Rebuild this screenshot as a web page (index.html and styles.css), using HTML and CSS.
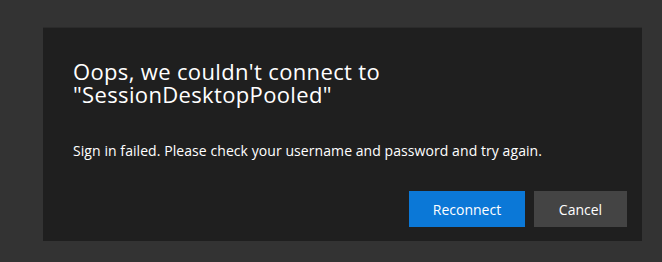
FILE: index.html
```html
<!DOCTYPE html>
<html lang="en">

<head>
  <meta charset="UTF-8">
  <meta name="viewport" content="width=device-width, initial-scale=1.0">
  <title>Connection error</title>
  <link rel="stylesheet" href="styles.css">
</head>

<body>
  <div class="stage">
    <div class="dialog">
      <h1 class="dialog-title">Oops, we couldn't connect to<br>"SessionDesktopPooled"</h1>
      <p class="dialog-message">Sign in failed. Please check your username and password and try again.</p>
      <div class="dialog-actions">
        <button class="btn btn-primary">Reconnect</button>
        <button class="btn btn-secondary">Cancel</button>
      </div>
    </div>
  </div>
</body>

</html>
```

FILE: styles.css
```css
* {
  margin: 0;
  padding: 0;
  box-sizing: border-box;
}

body {
  background-color: #333333;
  font-family: "Open Sans", "Noto Sans", sans-serif;
  color: #ffffff;
}

.stage {
  padding: 27px 0 0 43px;
}

.dialog {
  display: flex;
  flex-direction: column;
  width: 599px;
  height: 214px;
  padding: 32px 15px 14px 30px;
  background-color: #1f1f1f;
  border-top: 1px solid #2b2b2b;
}

.dialog-title {
  font-size: 22px;
  font-weight: 400;
  line-height: 23px;
  letter-spacing: 0.35px;
}

.dialog-message {
  margin-top: 35px;
  font-size: 14px;
  line-height: 20px;
  letter-spacing: 0.07px;
}

.dialog-actions {
  display: flex;
  justify-content: flex-end;
  gap: 9px;
  margin-top: auto;
}

.btn {
  height: 36px;
  font-family: inherit;
  font-size: 14px;
  color: #ffffff;
  border: none;
  outline: none;
  cursor: pointer;
}

.btn-primary {
  width: 116px;
  background-color: #0b78d7;
}

.btn-secondary {
  width: 93px;
  background-color: #444444;
}
```
